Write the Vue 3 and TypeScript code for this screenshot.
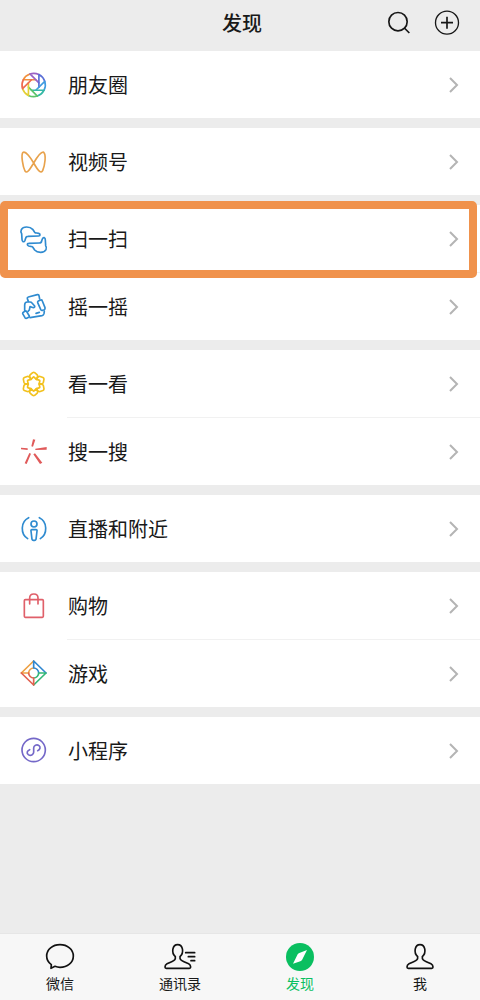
<script setup lang="ts">
import { ref } from 'vue'

type IconName =
  | 'moments' | 'channels' | 'scan' | 'shake' | 'look'
  | 'search' | 'live' | 'shop' | 'games' | 'mini'

interface Entry {
  icon: IconName
  label: string
  highlighted?: boolean
}

interface Tab {
  id: 'chats' | 'contacts' | 'discover' | 'me'
  label: string
}

const groups: Entry[][] = [
  [{ icon: 'moments', label: '朋友圈' }],
  [{ icon: 'channels', label: '视频号' }],
  [
    { icon: 'scan', label: '扫一扫', highlighted: true },
    { icon: 'shake', label: '摇一摇' },
  ],
  [
    { icon: 'look', label: '看一看' },
    { icon: 'search', label: '搜一搜' },
  ],
  [{ icon: 'live', label: '直播和附近' }],
  [
    { icon: 'shop', label: '购物' },
    { icon: 'games', label: '游戏' },
  ],
  [{ icon: 'mini', label: '小程序' }],
]

const tabs: Tab[] = [
  { id: 'chats', label: '微信' },
  { id: 'contacts', label: '通讯录' },
  { id: 'discover', label: '发现' },
  { id: 'me', label: '我' },
]

const active = ref<Tab['id']>('discover')

const blades = ['#f2913d', '#9a62c4', '#5b6fd6', '#3f9be0', '#35b8a6', '#5cc46a', '#e3cf35', '#ef6a50']
const petals = [0, 60, 120, 180, 240, 300]
</script>

<template>
  <div class="page">
    <header class="header">
      <h1 class="title">发现</h1>
      <div class="actions">
        <button type="button" class="action" aria-label="搜索">
          <svg viewBox="0 0 78 78" fill="none" stroke="#161616" stroke-width="5">
            <circle cx="36" cy="35" r="27.5" />
            <path d="M55 54 L70 69" />
          </svg>
        </button>
        <button type="button" class="action" aria-label="添加">
          <svg viewBox="0 0 78 78" fill="none" stroke="#161616" stroke-width="4">
            <circle cx="39" cy="38" r="34.5" />
            <path d="M39 20 V56 M21 38 H57" stroke-width="5" />
          </svg>
        </button>
      </div>
    </header>

    <main class="content">
      <ul v-for="(group, g) in groups" :key="g" class="group">
        <li v-for="entry in group" :key="entry.icon" class="item" :class="{ highlighted: entry.highlighted }">
          <a href="#" class="row" @click.prevent>
            <svg class="icon" viewBox="0 0 84 84" fill="none" stroke-width="5" stroke-linejoin="round" stroke-linecap="round" aria-hidden="true">
              <g v-if="entry.icon === 'moments'" transform="translate(41 42)">
                <path
                  v-for="(color, i) in blades"
                  :key="i"
                  :stroke="color"
                  :transform="`rotate(${i * 45})`"
                  d="M6.5 -15.7 H-31.3 A35 35 0 0 1 -11 -33.2"
                />
              </g>
              <path
                v-else-if="entry.icon === 'channels'"
                stroke="#e8a24c"
                d="M41 45 C33 31 17 8 9 13 C2 20 9 57 15 69 C20 77 27 69 41 45 C51 28 63 9 71 13 C79 20 75 51 68 68 C63 77 55 70 41 45 Z"
              />
              <g v-else-if="entry.icon === 'scan'" stroke="#2f8bd0">
                <path
                  v-for="turn in [0, 180]"
                  :key="turn"
                  :transform="`rotate(${turn} 41 44)`"
                  d="M6 43 L5 26 Q1 21 4 14 Q8 6 20 6 Q32 6 38 13 L44 22 Q46 24 50 24 L56 25 Q60 26 60 30 Q60 33 56 33 L24 34 Q18 34 17 40 L15 46 Q13 51 9 50 Q6 49 6 43 Z"
                />
              </g>
              <g v-else-if="entry.icon === 'shake'" stroke="#2f8bd0">
                <path d="M25 25 L22 17 Q21 13 25 12 L52 5 Q56 4 57 8 L59 18" />
                <path d="M55 24 L62 21 Q66 20 67 24 L75 44 Q76 48 73 50 L68 52 Q64 53 62 49 L53 29 Q52 26 55 24 Z" />
                <path d="M14 52 V36 Q14 27 22 27 H30 Q34 27 36 30 L44 39 Q45 43 41 44 Q38 44 34 42 L30 41 L28 51 L24 55" />
                <path d="M10 58 L15 54 Q18 53 20 56 L28 69 Q28 72 26 73 L20 76 Q17 77 15 74 L8 62 Q8 59 10 58 Z" />
                <path d="M30 74 L66 68 Q71 67 72 62 L73 54 M48 61 L58 58" />
              </g>
              <g v-else-if="entry.icon === 'look'" transform="translate(41 42)" stroke="#f2c11d">
                <path
                  v-for="angle in petals"
                  :key="angle"
                  :transform="`rotate(${angle})`"
                  d="M-8 -14 L-12 -23 Q-12 -26 -10 -28 L-3 -34 Q0 -36 3 -34 L10 -28 Q12 -26 12 -23 L8 -14 L2 -20 Q0 -22 -2 -20 Z"
                />
              </g>
              <path
                v-else-if="entry.icon === 'search'"
                fill="#e05a5a"
                d="M39 4 L46 5 L39 26 L34 25 Z M3 29 L23 31 V36 L3 34 Z M46 32 L80 27 V35 L46 36 Z M28 45 L33 47 L20 78 L14 76 Z M40 49 L45 46 L67 74 L60 78 Z"
              />
              <g v-else-if="entry.icon === 'live'" stroke="#2f8bd0">
                <path d="M26 8 C1 20 1 57 23 71 M58 8 C83 20 83 57 61 71" />
                <circle cx="42" cy="27" r="9" />
                <path d="M36 44 H48 Q52 44 51 48 L48 73 Q47 76 44 76 H40 Q37 76 36 73 L33 48 Q32 44 36 44 Z" />
              </g>
              <g v-else-if="entry.icon === 'shop'" stroke="#e0606a">
                <rect x="13" y="23" width="57" height="53" rx="3" />
                <path d="M29 36 V18 C29 2 54 2 54 18 V36" />
              </g>
              <g v-else-if="entry.icon === 'games'">
                <path stroke="#eda043" d="M41 3 L4 39 H26 A15 15 0 0 1 41 24" />
                <path stroke="#2f86cf" d="M78 39 L41 3 V24 A15 15 0 0 1 56 39" />
                <path stroke="#35b877" d="M41 75 L78 39 H56 A15 15 0 0 1 41 54" />
                <path stroke="#e2604f" d="M4 39 L41 75 V54 A15 15 0 0 1 26 39" />
              </g>
              <g v-else stroke="#7468c8">
                <circle cx="41" cy="39" r="35" />
                <path d="M53 41 C61 38 62 30 57 26 C50 21 41 26 41 33 V46 C41 53 32 58 25 53 C19 48 21 41 29 38" />
              </g>
            </svg>
            <span class="label">{{ entry.label }}</span>
            <svg class="chevron" viewBox="0 0 10 18" fill="none" stroke="#b4b4b4" stroke-width="2" aria-hidden="true">
              <path d="M1 2 L8 9 L1 16" />
            </svg>
          </a>
        </li>
      </ul>
    </main>

    <nav class="tabs">
      <a
        v-for="tab in tabs"
        :key="tab.id"
        href="#"
        class="tab"
        :class="{ active: tab.id === active }"
        :aria-current="tab.id === active ? 'page' : undefined"
        @click.prevent="active = tab.id"
      >
        <svg class="icon" viewBox="0 0 84 84" fill="none" stroke="#111" stroke-width="5" stroke-linejoin="round" stroke-linecap="round" aria-hidden="true">
          <path
            v-if="tab.id === 'chats'"
            d="M15 76 L16 65 C6 58 2 49 2 39 C2 19 20 5 42 5 C64 5 82 19 82 39 C82 59 64 73 42 73 C37 73 32 72 27 70 Z"
          />
          <template v-else-if="tab.id === 'contacts'">
            <path d="M28 41 C15 29 19 5 35 5 C51 5 55 29 42 41 C41 50 45 52 54 56 L68 62 Q74 65 74 72 Q74 76 70 76 H1 Q-3 76 -3 72 Q-3 65 3 62 L17 56 C26 52 29 50 28 41 Z" />
            <path d="M59 29 H86 M67 41 H86 M75 53 H86" />
          </template>
          <template v-else-if="tab.id === 'discover'">
            <circle cx="42" cy="42" r="42" fill="#0abf60" stroke="none" />
            <path d="M63 21 L48 51 Q46 54 43 55 L21 62 L35 34 Q37 31 40 30 Z" fill="#fff" stroke="none" />
          </template>
          <path
            v-else
            d="M35 41 C22 29 26 5 42 5 C58 5 62 29 49 41 C48 50 52 52 61 56 L75 62 Q81 65 81 72 Q81 76 77 76 H7 Q3 76 3 72 Q3 65 9 62 L23 56 C32 52 36 50 35 41 Z"
          />
        </svg>
        <span class="tab-label">{{ tab.label }}</span>
      </a>
    </nav>
  </div>
</template>

<style>
body {
  margin: 0;
  background: #ececec;
}
</style>

<style scoped>
.page {
  display: flex;
  flex-direction: column;
  min-height: 100vh;
  background: #ececec;
  color: #191919;
  font-family: "Noto Sans CJK SC", "Noto Sans", sans-serif;
}

.header {
  display: grid;
  grid-template-columns: 1fr auto 1fr;
  align-items: center;
  height: 51px;
  box-sizing: border-box;
  padding: 0 20px 6px 24px;
}

.title {
  grid-column: 2;
  margin: 0;
  font-size: 20px;
  line-height: 28px;
  font-weight: 500;
}

.actions {
  display: flex;
  justify-content: flex-end;
  gap: 22px;
}

.action {
  width: 26px;
  height: 26px;
  padding: 0;
  border: 0;
  background: none;
  cursor: pointer;
}

.action svg {
  display: block;
  width: 100%;
  height: 100%;
}

.content {
  display: flex;
  flex: 1;
  flex-direction: column;
  gap: 10px;
}

.group {
  margin: 0;
  padding: 0;
  list-style: none;
  background: #fff;
}

.item {
  position: relative;
}

.item + .item::before {
  content: "";
  display: block;
  height: 1px;
  margin-left: 67px;
  background: #f1f1f1;
}

.highlighted::after {
  content: "";
  position: absolute;
  z-index: 1;
  inset: -4px 3px -6px 0;
  border: 8px solid #f0924c;
  border-radius: 5px;
  pointer-events: none;
}

.row {
  display: flex;
  align-items: center;
  height: 67px;
  box-sizing: border-box;
  padding: 0 21px 0 20px;
  color: inherit;
  text-decoration: none;
}

.icon {
  flex: none;
  width: 28px;
  height: 28px;
  overflow: visible;
}

.label {
  flex: 1;
  margin-left: 20px;
  font-size: 20px;
  line-height: 28px;
}

.chevron {
  flex: none;
  width: 10px;
  height: 18px;
}

.tabs {
  display: flex;
  border-top: 1px solid #e6e6e6;
  background: #f7f7f7;
}

.tab {
  display: flex;
  flex: 1;
  flex-direction: column;
  align-items: center;
  gap: 2px;
  padding: 9px 0 7px;
  color: #191919;
  text-decoration: none;
}

.tab-label {
  font-size: 14px;
  line-height: 20px;
}

.active {
  color: #0abf60;
}
</style>
